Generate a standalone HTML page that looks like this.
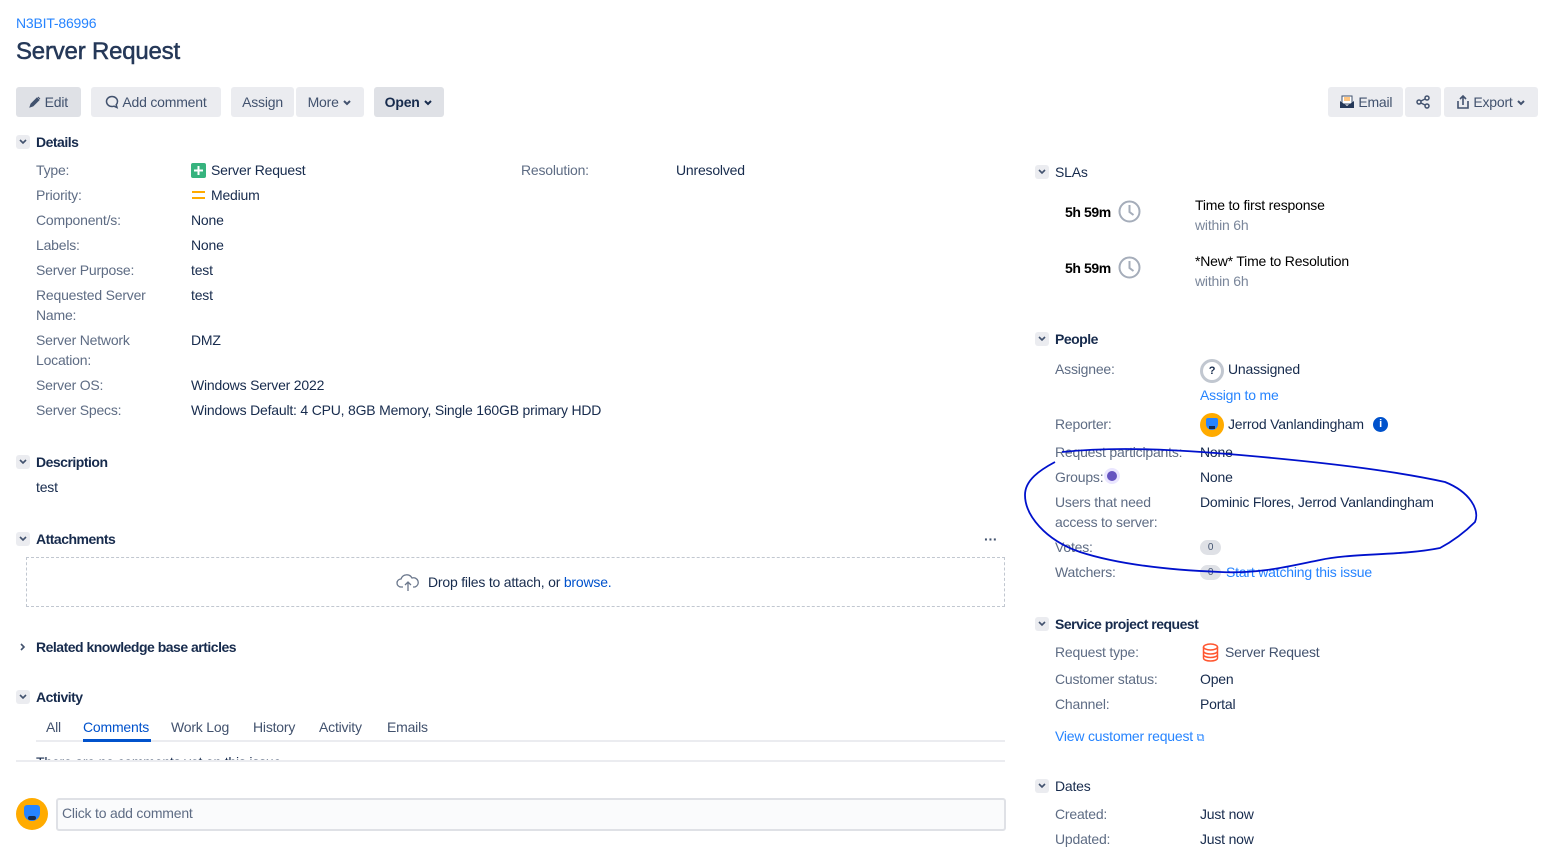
<!DOCTYPE html>
<html><head><meta charset="utf-8"><style>
body{margin:0;width:1552px;height:848px;overflow:hidden;background:#fff;font-family:"Liberation Sans",sans-serif;color:#172b4d;position:relative;letter-spacing:-0.2px}
.t{position:absolute;white-space:nowrap;line-height:20px;font-size:14px}
.l{color:#5e6c84}
.a{color:#0052cc}
.h{font-weight:bold;font-size:14px;letter-spacing:-0.5px}
.btn{position:absolute;top:87px;height:30px;background:#ebecf0;border-radius:3px;font-size:14px;line-height:30px;color:#42526e;text-align:center}
.tw{position:absolute;width:14px;height:14px;background:#ebecf0;border-radius:3px}
.tw svg{position:absolute;left:3px;top:3px}
.badge{position:absolute;width:21px;height:15px;border-radius:8px;background:#dfe1e6;font-size:10px;line-height:15px;text-align:center;color:#42526e}
</style></head><body>
<div class="t a" style="left:16px;top:13px;color:#2684ff">N3BIT-86996</div>
<div class="t" style="left:16px;top:36px;font-size:24px;line-height:32px;color:#253858;-webkit-text-stroke:0.5px #253858">Server Request</div>

<div class="btn" style="left:16px;width:65px;background:#dfe1e6"><svg width="12" height="12" viewBox="0 0 12 12" style="vertical-align:-1px"><path d="M1 11l1-3 6-6 2 2-6 6z M9 1l2 2" fill="#42526e" stroke="#42526e"/></svg> Edit</div>
<div class="btn" style="left:91px;width:130px"><svg width="14" height="14" viewBox="0 0 14 14" style="vertical-align:-2px"><path d="M7 1.5a5.5 5 0 100 10 6 6 0 002-.3l3 1.3-.8-2.7A5 5 0 0012.5 6.5 5.5 5 0 007 1.5z" fill="none" stroke="#42526e" stroke-width="1.5"/></svg> Add comment</div>
<div class="btn" style="left:231px;width:63px">Assign</div>
<div class="btn" style="left:296px;width:68px">More <svg width="10" height="8" viewBox="0 0 10 8"><path d="M2 2l3 3 3-3" stroke="#42526e" stroke-width="2" fill="none"/></svg></div>
<div class="btn" style="left:374px;width:70px;background:#dfe1e6;color:#172b4d;font-weight:bold">Open <svg width="10" height="8" viewBox="0 0 10 8"><path d="M2 2l3 3 3-3" stroke="#172b4d" stroke-width="2" fill="none"/></svg></div>

<div class="btn" style="left:1328px;width:75px"><svg width="16" height="14" viewBox="0 0 16 14" style="vertical-align:-2px"><rect x="3" y="1" width="10" height="8" fill="#fff" stroke="#42526e"/><path d="M5 3h6M5 5h6" stroke="#ff8b00"/><path d="M1 6v7h14V6l-7 5z" fill="#253858"/></svg> Email</div>
<div class="btn" style="left:1405px;width:36px"><svg width="14" height="14" viewBox="0 0 14 14" style="vertical-align:-2px"><circle cx="3" cy="7" r="2" fill="none" stroke="#42526e" stroke-width="1.5"/><circle cx="11" cy="3" r="2" fill="none" stroke="#42526e" stroke-width="1.5"/><circle cx="11" cy="11" r="2" fill="none" stroke="#42526e" stroke-width="1.5"/><path d="M5 6l4-2M5 8l4 2" stroke="#42526e" stroke-width="1.5"/></svg></div>
<div class="btn" style="left:1444px;width:94px"><svg width="14" height="15" viewBox="0 0 14 15" style="vertical-align:-2px"><path d="M2 7v7h10V7" fill="none" stroke="#42526e" stroke-width="1.6"/><path d="M7 11V2M4 5l3-3 3 3" fill="none" stroke="#42526e" stroke-width="1.6"/></svg> Export <svg width="10" height="8" viewBox="0 0 10 8"><path d="M2 2l3 3 3-3" stroke="#42526e" stroke-width="2" fill="none"/></svg></div>

<div class="tw" style="left:16px;top:135px"><svg width="8" height="8"><path d="M1 2l3 3 3-3" stroke="#42526e" stroke-width="1.6" fill="none"/></svg></div>
<div class="t h" style="left:36px;top:132px">Details</div>

<div class="t l" style="left:36px;top:160px">Type:</div>
<div style="position:absolute;left:191px;top:163px;width:15px;height:15px;background:#36b37e;border-radius:2px"><svg width="15" height="15"><path d="M7.5 3v9M3 7.5h9" stroke="#fff" stroke-width="2"/></svg></div>
<div class="t" style="left:211px;top:160px">Server Request</div>
<div class="t l" style="left:521px;top:160px">Resolution:</div>
<div class="t" style="left:676px;top:160px">Unresolved</div>
<div class="t l" style="left:36px;top:185px">Priority:</div>
<svg style="position:absolute;left:192px;top:190px" width="14" height="10"><path d="M0 2h13M0 8h13" stroke="#ffab00" stroke-width="2"/></svg>
<div class="t" style="left:211px;top:185px">Medium</div>
<div class="t l" style="left:36px;top:210px">Component/s:</div><div class="t" style="left:191px;top:210px">None</div>
<div class="t l" style="left:36px;top:235px">Labels:</div><div class="t" style="left:191px;top:235px">None</div>
<div class="t l" style="left:36px;top:260px">Server Purpose:</div><div class="t" style="left:191px;top:260px">test</div>
<div class="t l" style="left:36px;top:285px">Requested Server<br>Name:</div><div class="t" style="left:191px;top:285px">test</div>
<div class="t l" style="left:36px;top:330px">Server Network<br>Location:</div><div class="t" style="left:191px;top:330px">DMZ</div>
<div class="t l" style="left:36px;top:375px">Server OS:</div><div class="t" style="left:191px;top:375px">Windows Server 2022</div>
<div class="t l" style="left:36px;top:400px">Server Specs:</div><div class="t" style="left:191px;top:400px">Windows Default: 4 CPU, 8GB Memory, Single 160GB primary HDD</div>

<div class="tw" style="left:16px;top:455px"><svg width="8" height="8"><path d="M1 2l3 3 3-3" stroke="#42526e" stroke-width="1.6" fill="none"/></svg></div>
<div class="t h" style="left:36px;top:452px">Description</div>
<div class="t" style="left:36px;top:477px">test</div>

<div class="tw" style="left:16px;top:532px"><svg width="8" height="8"><path d="M1 2l3 3 3-3" stroke="#42526e" stroke-width="1.6" fill="none"/></svg></div>
<div class="t h" style="left:36px;top:529px">Attachments</div>
<div class="t" style="left:984px;top:529px;font-weight:bold;color:#42526e">···</div>
<div style="position:absolute;left:26px;top:557px;width:977px;height:48px;border:1px dashed #c1c7d0"></div>
<svg style="position:absolute;left:396px;top:572px" width="24" height="20" viewBox="0 0 24 20"><path d="M7 15H5a4 4 0 010-8 6 6 0 0111-1 4 4 0 013 9h-2" fill="none" stroke="#6b778c" stroke-width="1.3"/><path d="M12 19V10M9 13l3-3 3 3" fill="none" stroke="#6b778c" stroke-width="1.3"/></svg>
<div class="t" style="left:428px;top:572px">Drop files to attach, or <span class="a">browse.</span></div>

<div class="tw" style="left:16px;top:640px;background:none"><svg width="8" height="8"><path d="M2 1l3 3-3 3" stroke="#42526e" stroke-width="1.6" fill="none"/></svg></div>
<div class="t h" style="left:36px;top:637px">Related knowledge base articles</div>

<div class="tw" style="left:16px;top:690px"><svg width="8" height="8"><path d="M1 2l3 3 3-3" stroke="#42526e" stroke-width="1.6" fill="none"/></svg></div>
<div class="t h" style="left:36px;top:687px">Activity</div>
<div class="t" style="left:46px;top:717px;color:#42526e">All</div>
<div class="t" style="left:83px;top:717px;color:#0052cc">Comments</div>
<div class="t" style="left:171px;top:717px;color:#42526e">Work Log</div>
<div class="t" style="left:253px;top:717px;color:#42526e">History</div>
<div class="t" style="left:319px;top:717px;color:#42526e">Activity</div>
<div class="t" style="left:387px;top:717px;color:#42526e">Emails</div>
<div style="position:absolute;left:36px;top:740px;width:969px;height:2px;background:#ebecf0"></div>
<div style="position:absolute;left:83px;top:739px;width:68px;height:3px;background:#0052cc"></div>
<div style="position:absolute;left:36px;top:750px;height:10px;overflow:hidden"><div class="t" style="position:relative;top:2px">There are no comments yet on this issue.</div></div>
<div style="position:absolute;left:16px;top:760px;width:989px;height:2px;background:#ebecf0"></div>

<div style="position:absolute;left:16px;top:798px;width:32px;height:32px;border-radius:50%;background:#ffab00"><div style="position:absolute;left:8px;top:7px;width:16px;height:16px;background:#2684ff;border-radius:3px 3px 8px 8px"></div><div style="position:absolute;left:12px;top:18px;width:8px;height:4px;background:#172b4d;border-radius:2px"></div></div>
<div style="position:absolute;left:56px;top:798px;width:946px;height:29px;border:2px solid #dfe1e6;border-radius:3px;background:#fafbfc"></div>
<div class="t" style="left:62px;top:803px;color:#5e6c84">Click to add comment</div>

<div class="tw" style="left:1035px;top:165px"><svg width="8" height="8"><path d="M1 2l3 3 3-3" stroke="#42526e" stroke-width="1.6" fill="none"/></svg></div>
<div class="t" style="left:1055px;top:162px">SLAs</div>
<div class="t" style="left:1065px;top:202px;font-weight:bold;color:#000;letter-spacing:-0.4px">5h 59m</div>
<svg style="position:absolute;left:1118px;top:200px" width="23" height="23"><circle cx="11.5" cy="11.5" r="10" fill="none" stroke="#a5adba" stroke-width="2"/><path d="M11.5 5v7l4 3" fill="none" stroke="#a5adba" stroke-width="2"/></svg>
<div class="t" style="left:1195px;top:195px;color:#000">Time to first response</div>
<div class="t l" style="left:1195px;top:215px;color:#7a869a">within 6h</div>
<div class="t" style="left:1065px;top:258px;font-weight:bold;color:#000;letter-spacing:-0.4px">5h 59m</div>
<svg style="position:absolute;left:1118px;top:256px" width="23" height="23"><circle cx="11.5" cy="11.5" r="10" fill="none" stroke="#a5adba" stroke-width="2"/><path d="M11.5 5v7l4 3" fill="none" stroke="#a5adba" stroke-width="2"/></svg>
<div class="t" style="left:1195px;top:251px;color:#000">*New* Time to Resolution</div>
<div class="t l" style="left:1195px;top:271px;color:#7a869a">within 6h</div>

<div class="tw" style="left:1035px;top:332px"><svg width="8" height="8"><path d="M1 2l3 3 3-3" stroke="#42526e" stroke-width="1.6" fill="none"/></svg></div>
<div class="t h" style="left:1055px;top:329px">People</div>
<div class="t l" style="left:1055px;top:359px">Assignee:</div>
<div style="position:absolute;left:1200px;top:359px;width:18px;height:18px;border:3px solid #c1c7d0;border-radius:50%;background:#fff;font-size:11px;font-weight:bold;text-align:center;line-height:18px">?</div>
<div class="t" style="left:1228px;top:359px">Unassigned</div>
<div class="t a" style="left:1200px;top:385px;color:#2684ff">Assign to me</div>
<div class="t l" style="left:1055px;top:414px">Reporter:</div>
<div style="position:absolute;left:1200px;top:413px;width:24px;height:24px;border-radius:50%;background:#ffab00"><div style="position:absolute;left:6px;top:5px;width:12px;height:12px;background:#2684ff;border-radius:2px 2px 6px 6px"></div><div style="position:absolute;left:9px;top:13px;width:6px;height:3px;background:#172b4d"></div></div>
<div class="t" style="left:1228px;top:414px">Jerrod Vanlandingham</div>
<div style="position:absolute;left:1373px;top:417px;width:15px;height:15px;border-radius:50%;background:#0052cc;color:#fff;font-size:11px;font-weight:bold;line-height:15px;text-align:center">i</div>
<div class="t l" style="left:1055px;top:442px">Request participants:</div><div class="t" style="left:1200px;top:442px">None</div>
<div class="t l" style="left:1055px;top:467px">Groups:</div>
<div style="position:absolute;left:1104px;top:468px;width:10px;height:10px;border-radius:50%;background:#6554c0;border:3px solid #eae6ff"></div>
<div class="t" style="left:1200px;top:467px">None</div>
<div class="t l" style="left:1055px;top:492px">Users that need<br>access to server:</div>
<div class="t" style="left:1200px;top:492px">Dominic Flores, Jerrod Vanlandingham</div>
<div class="t l" style="left:1055px;top:537px">Votes:</div><div class="badge" style="left:1200px;top:540px">0</div>
<div class="t l" style="left:1055px;top:562px">Watchers:</div><div class="badge" style="left:1200px;top:565px">0</div>
<div class="t" style="left:1226px;top:562px;color:#2684ff">Start watching this issue</div>

<svg style="position:absolute;left:0;top:0" width="1552" height="848"><path d="M1062 452 C1120 446 1180 450 1240 455 C1320 462 1390 470 1445 482 C1470 492 1480 510 1475 522 C1465 532 1455 540 1440 548 C1400 556 1350 553 1320 560 C1290 566 1260 574 1220 572 C1170 570 1120 565 1080 552 C1045 540 1025 515 1025 495 C1025 480 1040 470 1055 462" fill="none" stroke="#0011cc" stroke-width="1.8"/></svg>

<div class="tw" style="left:1035px;top:617px"><svg width="8" height="8"><path d="M1 2l3 3 3-3" stroke="#42526e" stroke-width="1.6" fill="none"/></svg></div>
<div class="t h" style="left:1055px;top:614px">Service project request</div>
<div class="t l" style="left:1055px;top:642px">Request type:</div>
<svg style="position:absolute;left:1202px;top:643px" width="17" height="19" viewBox="0 0 17 19"><ellipse cx="8.5" cy="4" rx="7" ry="3" fill="none" stroke="#ff5630" stroke-width="1.5"/><path d="M1.5 4v11c0 4 14 4 14 0V4M1.5 8c0 4 14 4 14 0M1.5 11.5c0 4 14 4 14 0" fill="none" stroke="#ff5630" stroke-width="1.5"/></svg>
<div class="t" style="left:1225px;top:642px;color:#42526e">Server Request</div>
<div class="t l" style="left:1055px;top:669px">Customer status:</div><div class="t" style="left:1200px;top:669px">Open</div>
<div class="t l" style="left:1055px;top:694px">Channel:</div><div class="t" style="left:1200px;top:694px">Portal</div>
<div class="t" style="left:1055px;top:726px;color:#2684ff">View customer request <span style="font-size:11px">&#x29C9;</span></div>

<div class="tw" style="left:1035px;top:779px"><svg width="8" height="8"><path d="M1 2l3 3 3-3" stroke="#42526e" stroke-width="1.6" fill="none"/></svg></div>
<div class="t" style="left:1055px;top:776px">Dates</div>
<div class="t l" style="left:1055px;top:804px">Created:</div><div class="t" style="left:1200px;top:804px">Just now</div>
<div class="t l" style="left:1055px;top:829px">Updated:</div><div class="t" style="left:1200px;top:829px">Just now</div>
</body></html>
